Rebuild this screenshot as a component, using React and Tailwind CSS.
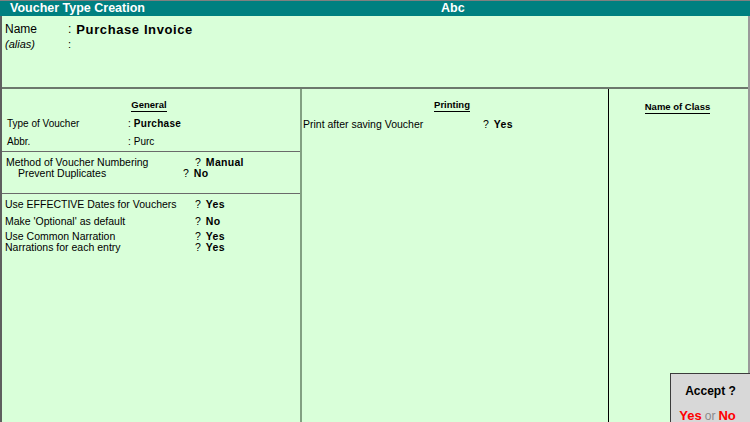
import React from "react";

function Row({ h, label, labelW, pl = "pl-[4px]", value, sep = "?", gap = "ml-[5px]", size = "text-[10.5px]" }) {
  return (
    <div className={`flex items-center ${h} ${pl} ${size} leading-none whitespace-nowrap`}>
      <span className={`${labelW} shrink-0`}>{label}</span>
      <span>{sep}</span>
      <span className={`${gap} font-bold tracking-[0.3px]`}>{value}</span>
    </div>
  );
}

export default function App() {
  return (
    <div className="w-[750px] h-[422px] bg-[#d9ffd9] flex flex-col overflow-hidden relative font-['Liberation_Sans',Arial,sans-serif] text-black">
      {/* title bar */}
      <div className="h-[16px] shrink-0 border-t border-[#808080] bg-[#008080] text-white font-bold text-[12.5px] flex items-center leading-none whitespace-nowrap">
        <span className="pl-[10px] w-[441px]">Voucher Type Creation</span>
        <span>Abc</span>
      </div>

      <div className="flex-1 flex flex-col border-l-2 border-l-[#5f5f5f] border-r-2 border-r-[#9a9a9a] min-h-0">
        {/* name section */}
        <div className="h-[73px] shrink-0 border-b-2 border-[#6c786c] pl-[3px] pt-[5px]">
          <div className="flex items-center h-[16px] leading-none whitespace-nowrap">
            <span className="w-[63px] text-[12px]">Name</span>
            <span className="text-[12px]">:</span>
            <span className="ml-[5px] text-[13px] font-bold tracking-[0.6px]">Purchase Invoice</span>
          </div>
          <div className="flex items-center h-[14px] leading-none whitespace-nowrap">
            <span className="w-[63px] text-[11px] italic">(alias)</span>
            <span className="text-[11px]">:</span>
          </div>
        </div>

        {/* columns */}
        <div className="flex-1 flex min-h-0">
          {/* General */}
          <div className="w-[300px] shrink-0 border-r-2 border-[#82a082] flex flex-col">
            <div className="h-[63px] shrink-0 border-b border-[#6a6a6a]">
              <div className="h-[9px]" />
              <div className="h-[15px] flex items-center justify-center pr-[4px]">
                <span className="text-[9.5px] font-bold leading-[12px] border-b border-black">General</span>
              </div>
              <Row h="h-[22px]" pl="pl-[5px]" size="text-[10px]" label="Type of Voucher" labelW="w-[121px]" sep=":" gap="ml-[3px]" value="Purchase" />
              <div className="flex items-center h-[14px] pl-[5px] text-[10px] leading-none whitespace-nowrap">
                <span className="w-[121px] shrink-0">Abbr.</span>
                <span>:</span>
                <span className="ml-[3px]">Purc</span>
              </div>
            </div>
            <div className="h-[42px] shrink-0 border-b border-[#6a6a6a] pt-[5px]">
              <Row h="h-[11px]" label="Method of Voucher Numbering" labelW="w-[189px]" value="Manual" />
              <Row h="h-[11px]" pl="pl-[16px]" label="Prevent Duplicates" labelW="w-[165px]" value="No" />
            </div>
            <div className="pt-[2px]">
              <Row h="h-[16px]" pl="pl-[3px]" label="Use EFFECTIVE Dates for Vouchers" labelW="w-[190px]" value="Yes" />
              <Row h="h-[18px]" pl="pl-[3px]" label="Make 'Optional' as default" labelW="w-[190px]" value="No" />
              <Row h="h-[12px]" pl="pl-[3px]" label="Use Common Narration" labelW="w-[190px]" value="Yes" />
              <Row h="h-[11px]" pl="pl-[3px]" label="Narrations for each entry" labelW="w-[190px]" value="Yes" />
            </div>
          </div>

          {/* Printing */}
          <div className="w-[307px] shrink-0 border-r border-black flex flex-col">
            <div className="h-[9px]" />
            <div className="h-[15px] flex items-center justify-center pr-[6px]">
              <span className="text-[9.5px] font-bold leading-[12px] border-b border-black">Printing</span>
            </div>
            <Row h="h-[22px]" pl="pl-[1px]" size="text-[10.5px]" label="Print after saving Voucher" labelW="w-[180px]" value="Yes" />
          </div>

          {/* Name of Class */}
          <div className="flex-1 flex flex-col">
            <div className="h-[11px]" />
            <div className="h-[15px] flex items-center justify-center pr-[2px]">
              <span className="text-[9.5px] font-bold leading-[12px] border-b border-black">Name of Class</span>
            </div>
          </div>
        </div>
      </div>

      {/* Accept dialog */}
      <div className="absolute right-0 bottom-0 w-[80px] h-[49px] bg-[#d8d8d8] border-t border-l border-[#3c3c3c] flex flex-col items-center">
        <div className="h-[35px] flex items-center text-[12px] font-bold leading-none whitespace-nowrap pb-[2px]">Accept ?</div>
        <div className="flex items-center text-[13px] leading-none whitespace-nowrap pr-[6px]">
          <span className="font-bold text-[#ff0000]">Yes</span>
          <span className="mx-[3px] text-[12px] text-[#8a8a8a]">or</span>
          <span className="font-bold text-[#ff0000]">No</span>
        </div>
      </div>
    </div>
  );
}
